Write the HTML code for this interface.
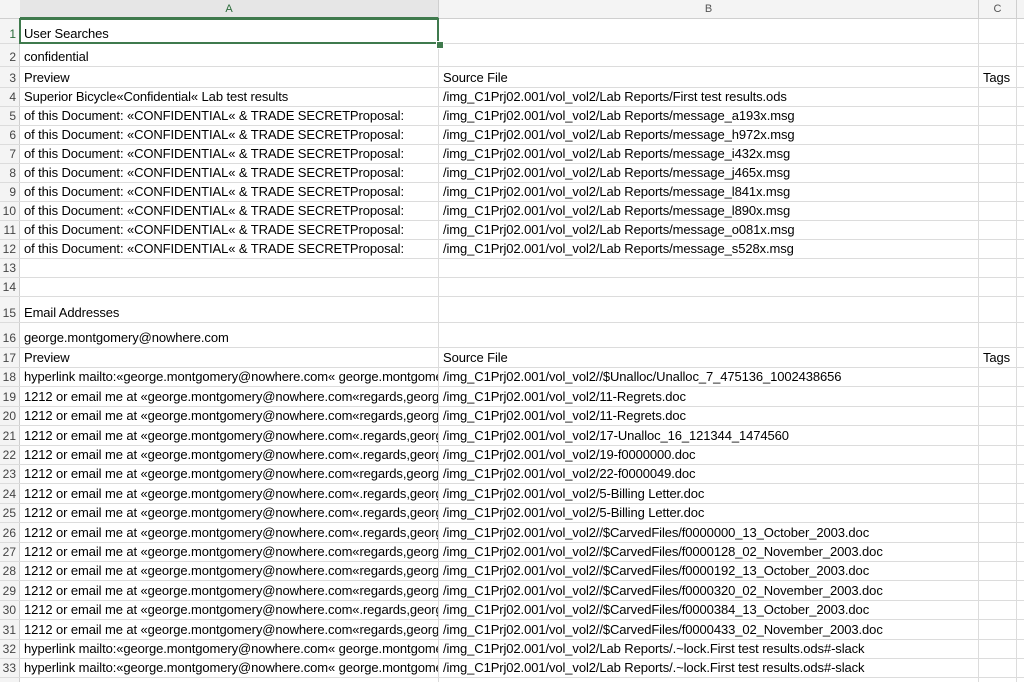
<!DOCTYPE html>
<html><head><meta charset="utf-8"><style>
html,body{margin:0;width:1024px;height:682px;overflow:hidden}
body{background:#fff;font-family:"Liberation Sans",sans-serif;font-size:13px;color:#000;position:relative}
.hd{position:absolute;top:0;height:18px;background:#f4f4f4;border-bottom:1px solid #cfcfcf;color:#555;text-align:center;line-height:18px;font-size:11px}
.r{position:absolute;left:0;width:1024px;border-bottom:1px solid #dcdcdc;box-sizing:border-box}
.n{position:absolute;left:0;top:0;bottom:0;width:20px;background:#f4f4f4;border-right:1px solid #cfcfcf;color:#444;font-size:12px;display:flex;align-items:flex-end;justify-content:flex-end;padding-right:3px;box-sizing:border-box;padding-bottom:2px;overflow:hidden}
.c{position:absolute;top:0;bottom:0;display:flex;align-items:flex-end;padding-left:4px;padding-bottom:2px;box-sizing:border-box;white-space:nowrap;overflow:hidden;letter-spacing:-0.1px;border-right:1px solid #dcdcdc}
.a{left:20px;width:419px}.b{left:439px;width:540px}.cc{left:979px;width:38px}
</style></head><body>
<div class="hd" style="left:0;width:20px;border-right:1px solid #cfcfcf"></div>
<div class="hd" style="left:20px;width:418px;border-right:1px solid #cfcfcf;color:#2b6b3a;background:#e6e6e6;border-bottom:2px solid #3f7a4d;height:17px">A</div>
<div class="hd" style="left:439px;width:539px;border-right:1px solid #cfcfcf">B</div>
<div class="hd" style="left:979px;width:37px;border-right:1px solid #cfcfcf">C</div>
<div class="hd" style="left:1017px;width:7px"></div>
<div id="rows"></div>
<script>
var rows=[
[1,19,25,"User Searches","",""],
[2,44,23,"confidential","",""],
[3,67,21,"Preview","Source File","Tags"],
[4,88,19,"Superior Bicycle«Confidential« Lab test results","/img_C1Prj02.001/vol_vol2/Lab Reports/First test results.ods",""]];
var ms=["a193x","h972x","i432x","j465x","l841x","l890x","o081x","s528x"];
for(var i=0;i<8;i++)rows.push([5+i,107+i*19,19,"of this Document: «CONFIDENTIAL« &amp; TRADE SECRETProposal:","/img_C1Prj02.001/vol_vol2/Lab Reports/message_"+ms[i]+".msg",""]);
rows.push([13,259,19,"","",""]);rows.push([14,278,19,"","",""]);
rows.push([15,297,26,"Email Addresses","",""]);
rows.push([16,323,25,"george.montgomery@nowhere.com","",""]);
rows.push([17,348,20,"Preview","Source File","Tags"]);
var hl="hyperlink mailto:«george.montgomery@nowhere.com« george.montgomery",
 e1="1212 or email me at «george.montgomery@nowhere.com«regards,george",
 e2="1212 or email me at «george.montgomery@nowhere.com«.regards,george";
var p="/img_C1Prj02.001/vol_vol2/";
var d=[[hl,p+"/$Unalloc/Unalloc_7_475136_1002438656"],[e1,p+"11-Regrets.doc"],[e1,p+"11-Regrets.doc"],[e2,p+"17-Unalloc_16_121344_1474560"],[e2,p+"19-f0000000.doc"],[e1,p+"22-f0000049.doc"],[e2,p+"5-Billing Letter.doc"],[e2,p+"5-Billing Letter.doc"],[e2,p+"/$CarvedFiles/f0000000_13_October_2003.doc"],[e1,p+"/$CarvedFiles/f0000128_02_November_2003.doc"],[e1,p+"/$CarvedFiles/f0000192_13_October_2003.doc"],[e1,p+"/$CarvedFiles/f0000320_02_November_2003.doc"],[e2,p+"/$CarvedFiles/f0000384_13_October_2003.doc"],[e1,p+"/$CarvedFiles/f0000433_02_November_2003.doc"],[hl,p+"Lab Reports/.~lock.First test results.ods#-slack"],[hl,p+"Lab Reports/.~lock.First test results.ods#-slack"]];
for(var i=0;i<16;i++)rows.push([18+i,368+i*19.4,19.4,d[i][0],d[i][1],""]);
rows.push([34,678.4,19,"","",""]);
var h="";
rows.forEach(function(r){h+='<div class="r" style="top:'+r[1]+'px;height:'+r[2]+'px"><div class="n"'+(r[0]==1?' style="color:#2b6b3a"':'')+'>'+r[0]+'</div><div class="c a">'+r[3]+'</div><div class="c b">'+r[4]+'</div><div class="c cc">'+r[5]+'</div></div>';});
document.getElementById("rows").innerHTML=h;
</script>
<div style="position:absolute;left:19px;top:18px;width:420px;height:26px;border:2px solid #3f7a4d;box-sizing:border-box"></div>
<div style="position:absolute;left:436px;top:41px;width:6px;height:6px;background:#3f7a4d;border:1px solid #fff"></div>
</body></html>
